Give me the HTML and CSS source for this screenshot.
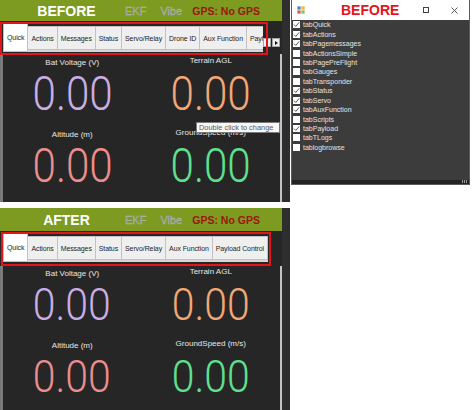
FILE: index.html
```html
<!DOCTYPE html>
<html>
<head>
<meta charset="utf-8">
<link rel="stylesheet" href="styles.css">
</head>
<body>
<div class="page">
  <div class="row-top">
    <section class="panel panel--before">
      <div class="panel-main">
        <header class="hud-head">
          <span class="hud-title">BEFORE</span>
          <span class="hud-flag">EKF</span>
          <span class="hud-flag hud-flag--vibe">Vibe</span>
          <span class="hud-gps">GPS: No GPS</span>
        </header>
        <div class="tabstrip">
          <div class="tabs tabs--clip">
            <span class="tab tab--active">Quick</span>
            <span class="tab">Actions</span>
            <span class="tab">Messages</span>
            <span class="tab">Status</span>
            <span class="tab">Servo/Relay</span>
            <span class="tab">Drone ID</span>
            <span class="tab">Aux Function</span>
            <span class="tab">Payload Control</span>
          </div>
          <div class="scroll-btns">
            <span class="sbtn"></span>
            <span class="sbtn"><span class="tri"></span></span>
          </div>
        </div>
        <div class="quick">
          <div class="cell"><div class="cell-label">Bat Voltage (V)</div><div class="cell-value v-lav"><span>0.00</span></div></div>
          <div class="cell cell--right"><div class="cell-label">Terrain AGL</div><div class="cell-value v-orange"><span>0.00</span></div></div>
          <div class="cell"><div class="cell-label">Altitude (m)</div><div class="cell-value v-salmon"><span>0.00</span></div></div>
          <div class="cell cell--right"><div class="cell-label">GroundSpeed (m/s)</div><div class="cell-value v-green"><span>0.00</span></div></div>
        </div>
      </div>
      <div class="panel-edge"></div>
      <div class="annot"></div>
      <div class="tooltip">Double click to change</div>
    </section>

    <div class="winform">
      <div class="win-title">
        <svg class="win-icon" width="8" height="8" viewBox="0 0 8 8">
          <rect x="0" y="0" width="8" height="8" fill="#e9e4d4"/>
          <rect x="0.5" y="0.5" width="3" height="3" fill="#4a7fd8"/>
          <rect x="4.5" y="0.5" width="3" height="3" fill="#f2c12e"/>
          <rect x="0.5" y="4.5" width="3" height="3" fill="#e5533a"/>
          <rect x="4.5" y="4.5" width="3" height="3" fill="#8bc06a"/>
        </svg>
        <span class="win-caption">BEFORE</span>
        <span class="win-btn"><span class="win-max"></span></span>
        <span class="win-btn">
          <svg width="7" height="7" viewBox="0 0 7 7"><path d="M0.5 0.5 L6.5 6.5 M6.5 0.5 L0.5 6.5" stroke="#444" stroke-width="0.9" fill="none"/></svg>
        </span>
      </div>
      <div class="win-list">
        <div class="win-row"><span class="chk"><svg width="7" height="7" viewBox="0 0 7 7"><path d="M1 3.6 L2.8 5.4 L6.2 1.4" stroke="#555" stroke-width="1" fill="none"/></svg></span>tabQuick</div>
        <div class="win-row"><span class="chk"><svg width="7" height="7" viewBox="0 0 7 7"><path d="M1 3.6 L2.8 5.4 L6.2 1.4" stroke="#555" stroke-width="1" fill="none"/></svg></span>tabActions</div>
        <div class="win-row"><span class="chk"><svg width="7" height="7" viewBox="0 0 7 7"><path d="M1 3.6 L2.8 5.4 L6.2 1.4" stroke="#555" stroke-width="1" fill="none"/></svg></span>tabPagemessages</div>
        <div class="win-row"><span class="chk"></span>tabActionsSimple</div>
        <div class="win-row"><span class="chk"></span>tabPagePreFlight</div>
        <div class="win-row"><span class="chk"></span>tabGauges</div>
        <div class="win-row"><span class="chk"></span>tabTransponder</div>
        <div class="win-row"><span class="chk"><svg width="7" height="7" viewBox="0 0 7 7"><path d="M1 3.6 L2.8 5.4 L6.2 1.4" stroke="#555" stroke-width="1" fill="none"/></svg></span>tabStatus</div>
        <div class="win-row"><span class="chk"><svg width="7" height="7" viewBox="0 0 7 7"><path d="M1 3.6 L2.8 5.4 L6.2 1.4" stroke="#555" stroke-width="1" fill="none"/></svg></span>tabServo</div>
        <div class="win-row"><span class="chk"><svg width="7" height="7" viewBox="0 0 7 7"><path d="M1 3.6 L2.8 5.4 L6.2 1.4" stroke="#555" stroke-width="1" fill="none"/></svg></span>tabAuxFunction</div>
        <div class="win-row"><span class="chk"></span>tabScripts</div>
        <div class="win-row"><span class="chk"><svg width="7" height="7" viewBox="0 0 7 7"><path d="M1 3.6 L2.8 5.4 L6.2 1.4" stroke="#555" stroke-width="1" fill="none"/></svg></span>tabPayload</div>
        <div class="win-row"><span class="chk"></span>tabTLogs</div>
        <div class="win-row"><span class="chk"></span>tablogbrowse</div>
      </div>
      <div class="win-foot"><span class="grip"></span></div>
    </div>
  </div>

  <section class="panel panel--after">
    <div class="panel-main">
      <header class="hud-head">
        <span class="hud-title">AFTER</span>
        <span class="hud-flag">EKF</span>
        <span class="hud-flag hud-flag--vibe">Vibe</span>
        <span class="hud-gps">GPS: No GPS</span>
      </header>
      <div class="tabstrip">
        <div class="tabs">
          <span class="tab tab--active">Quick</span>
          <span class="tab">Actions</span>
          <span class="tab">Messages</span>
          <span class="tab">Status</span>
          <span class="tab">Servo/Relay</span>
          <span class="tab">Aux Function</span>
          <span class="tab">Payload Control</span>
        </div>
      </div>
      <div class="quick">
        <div class="cell"><div class="cell-label">Bat Voltage (V)</div><div class="cell-value v-lav"><span>0.00</span></div></div>
        <div class="cell cell--right"><div class="cell-label">Terrain AGL</div><div class="cell-value v-orange"><span>0.00</span></div></div>
        <div class="cell"><div class="cell-label">Altitude (m)</div><div class="cell-value v-salmon"><span>0.00</span></div></div>
        <div class="cell cell--right"><div class="cell-label">GroundSpeed (m/s)</div><div class="cell-value v-green"><span>0.00</span></div></div>
      </div>
    </div>
    <div class="panel-edge"></div>
    <div class="annot"></div>
  </section>
</div>
</body>
</html>
```

FILE: styles.css
```css
* { box-sizing: border-box; }

body {
  margin: 0;
  width: 474px;
  height: 410px;
  overflow: hidden;
  background: #ffffff;
  font-family: "Liberation Sans", Arial, sans-serif;
}

.page {
  display: flex;
  flex-direction: column;
  gap: 6px;
}

.row-top {
  display: flex;
  align-items: flex-start;
  height: 202px;
}

/* ---------- HUD panel ---------- */
.panel {
  position: relative;
  display: flex;
  flex: none;
  width: 290px;
  background: #2e2e2e;
}
.panel--before { height: 202px; }
.panel--after { height: 204px; }

.panel-main {
  width: 282px;
  display: flex;
  flex-direction: column;
  background: #262626;
}

.panel-edge {
  flex: 1;
  background: #2e2e2e;
}

.hud-head {
  height: 21px;
  flex: none;
  display: flex;
  align-items: center;
  padding-left: 8px;
  background: #7e9b21;
}
.panel--after .hud-head { height: 23px; }

.hud-title {
  width: 117px;
  text-align: center;
  color: #ffffff;
  font-weight: bold;
  font-size: 14px;
}
.hud-flag {
  color: #9d9d9d;
  font-size: 11px;
  -webkit-text-stroke: 0.3px #b8b8b8;
}
.hud-flag--vibe { margin-left: 14px; }
.hud-gps {
  margin-left: 10px;
  color: #9c160e;
  font-weight: bold;
  font-size: 10.5px;
}

/* ---------- tabs ---------- */
.tabstrip {
  height: 33px;
  flex: none;
  display: flex;
  padding: 2px 0 0 3px;
  background: #262626;
}
.panel--after .tabstrip { height: 35px; }

.tabs {
  display: flex;
  align-items: flex-start;
  height: 29px;
  flex: none;
  background: linear-gradient(to top, #d6d6d6 2px, transparent 2px);
}
.tabs--clip {
  width: 260px;
  overflow: hidden;
}

.tab {
  flex: none;
  display: flex;
  align-items: center;
  margin-top: 3px;
  height: 24px;
  padding: 0 3px;
  background: #efefef;
  border: 1px solid #c2c2c2;
  border-left: none;
  color: #1e1e1e;
  font-size: 7px;
  letter-spacing: -0.1px;
  white-space: nowrap;
}
.tab--active {
  margin-top: 0;
  height: 29px;
  background: #ffffff;
  border-left: 1px solid #c2c2c2;
}

.scroll-btns {
  display: flex;
  gap: 1px;
  margin-top: 15px;
}
.sbtn {
  width: 8px;
  height: 9px;
  background: #f0f0f0;
  border: 1px solid #a4a4a4;
  display: flex;
  align-items: center;
  justify-content: center;
}
.tri {
  width: 0;
  height: 0;
  border-top: 2.5px solid transparent;
  border-bottom: 2.5px solid transparent;
  border-left: 3px solid #111;
}

/* ---------- quick view ---------- */
.quick {
  flex: 1;
  display: grid;
  grid-template-columns: 1fr 1fr;
  align-content: start;
  row-gap: 11px;
  padding-top: 3px;
  border-left: 3px solid #7a7a7a;
  border-right: 2px solid #c4c4c4;
}
.panel--after .quick {
  padding-top: 2px;
  row-gap: 13px;
}

.cell {
  display: flex;
  flex-direction: column;
  align-items: center;
}
.cell--right .cell-label { margin-top: -2px; margin-bottom: 2px; }

.cell-label {
  font-size: 8px;
  line-height: 12px;
  color: #e6e6e6;
  white-space: nowrap;
}

.cell-value {
  font-family: Roboto, "Liberation Sans", sans-serif;
  font-weight: 300;
  font-size: 49px;
  line-height: 48px;
  height: 48px;
  margin-top: 1px;
}
.cell-value span {
  display: inline-block;
  transform: scaleX(0.86);
}
.panel--after .cell-value {
  font-size: 45px;
  line-height: 44px;
  height: 44px;
  margin-top: 3px;
}
.panel--after .cell-value span { transform: scaleX(0.91); }

.v-lav { color: #c9aee6; }
.v-orange { color: #f2a776; }
.v-salmon { color: #ec8e8c; }
.v-green { color: #5fe08e; }

/* ---------- overlays ---------- */
.annot {
  position: absolute;
  left: 0;
  top: 22px;
  width: 268px;
  height: 33px;
  border: 2px solid #e3141c;
}
.panel--after .annot {
  left: 1px;
  top: 24px;
  width: 270px;
  height: 34px;
}

.tooltip {
  position: absolute;
  left: 196px;
  top: 122px;
  width: 84px;
  height: 11px;
  padding-left: 2px;
  background: #f7f7f7;
  border: 1px solid #7a7a7a;
  color: #5a5a5a;
  font-size: 7.4px;
  line-height: 9px;
  white-space: nowrap;
}

/* ---------- win form ---------- */
.winform {
  flex: none;
  margin-left: 1px;
  width: 179px;
  height: 185px;
  display: flex;
  flex-direction: column;
  background: #3c3c3c;
  border-left: 1px solid #5a5a5a;
  border-right: 1px solid #5a5a5a;
  border-bottom: 1px solid #5a5a5a;
}

.win-title {
  height: 20px;
  flex: none;
  display: flex;
  align-items: center;
  padding-left: 5px;
  background: #ffffff;
}
.win-icon { flex: none; }
.win-caption {
  margin-left: 36px;
  color: #e3141c;
  font-weight: bold;
  font-size: 14px;
}
.win-btn {
  width: 29px;
  display: flex;
  justify-content: center;
  align-items: center;
}
.win-caption + .win-btn { margin-left: auto; }
.win-max {
  width: 6px;
  height: 6px;
  border: 1px solid #444;
}

.win-list {
  flex: 1;
  background: #3c3c3c;
}
.win-row {
  height: 9.45px;
  display: flex;
  align-items: center;
  color: #e4e4e4;
  font-size: 7px;
  white-space: nowrap;
}
.chk {
  width: 7px;
  height: 7px;
  margin-left: 1px;
  margin-right: 3px;
  background: #ffffff;
  display: flex;
}

.win-foot {
  height: 4px;
  flex: none;
  background: #232323;
  display: flex;
  justify-content: flex-end;
}
.grip {
  width: 6px;
  height: 3px;
  margin-right: 1px;
  background: repeating-linear-gradient(to right, #9a9a9a 0 1px, transparent 1px 2px);
}
```
